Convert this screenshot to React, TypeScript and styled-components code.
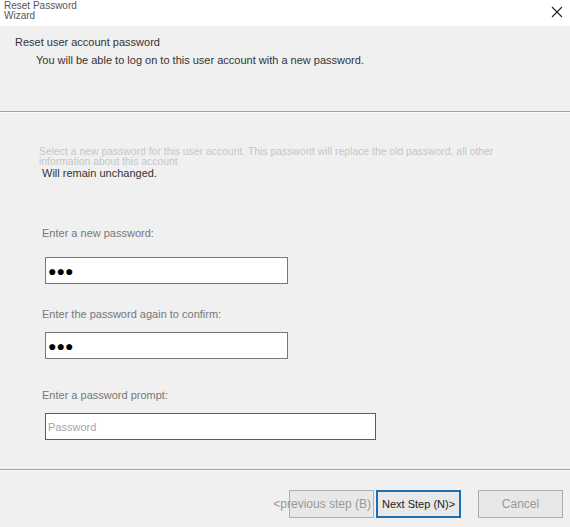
import styled, { createGlobalStyle } from 'styled-components';

const GlobalStyle = createGlobalStyle`
  html, body {
    margin: 0;
    padding: 0;
    background: #f0f0f0;
    font-family: "Liberation Sans", Arial, sans-serif;
  }
`;

const Field = ({ label, value, placeholder, wide, focused, top, gap }: {
  label: string;
  value?: string;
  placeholder?: string;
  wide?: boolean;
  focused?: boolean;
  top: number;
  gap: number;
}) => (
  <FieldBlock $top={top}>
    <FieldLabel>{label}</FieldLabel>
    <TextBox $wide={wide} $focused={focused} $gap={gap}>
      {value ? <Dots>{value}</Dots> : <Placeholder>{placeholder}</Placeholder>}
    </TextBox>
  </FieldBlock>
);

const App = () => {
  return (
    <Window>
      <GlobalStyle />
      <TitleBar>
        <TitleText>
          Reset Password
          <br />
          Wizard
        </TitleText>
        <CloseButton>
          <svg width='12' height='12' viewBox='0 0 12 12'>
            <path d='M1 1L11 11M11 1L1 11' stroke='#222' strokeWidth='1.1' />
          </svg>
        </CloseButton>
      </TitleBar>
      <Header>
        <HeaderTitle>Reset user account password</HeaderTitle>
        <HeaderSub>
          You will be able to log on to this user account with a new password.
        </HeaderSub>
      </Header>
      <Divider />
      <Body>
        <Faded>
          Select a new password for this user account. This password will
          replace the old password, all other
          <br />
          information about this account
        </Faded>
        <Note>Will remain unchanged.</Note>
        <Field label='Enter a new password:' value='●●●' top={48} gap={17} />
        <Field
          label='Enter the password again to confirm:'
          value='●●●'
          top={24}
          gap={11}
        />
        <Field
          label='Enter a password prompt:'
          placeholder='Password'
          wide={true}
          focused={true}
          top={30}
          gap={11}
        />
      </Body>
      <Divider />
      <Footer>
        <NavButton $faded={true}>
          <OverflowLabel>&lt;previous step (B)</OverflowLabel>
        </NavButton>
        <NavButton $primary={true}>Next Step (N)&gt;</NavButton>
        <Spacer />
        <NavButton $faded={true}>Cancel</NavButton>
      </Footer>
    </Window>
  );
};

const Window = styled.div`
  width: 570px;
  height: 527px;
  display: flex;
  flex-direction: column;
  background: #f0f0f0;
  overflow: hidden;
`;

const TitleBar = styled.div`
  height: 26px;
  background: #ffffff;
  display: flex;
  justify-content: space-between;
  padding: 0 4px;
`;

const TitleText = styled.div`
  font-size: 10px;
  line-height: 10px;
  color: #555;
  padding-top: 1px;
`;

const CloseButton = styled.div`
  padding: 4px 3px 0 0;
`;

const Header = styled.div`
  height: 85px;
  padding: 10px 0 0 15px;
  box-sizing: border-box;
`;

const HeaderTitle = styled.div`
  font-size: 11px;
  line-height: 13px;
  color: #333;
`;

const HeaderSub = styled.div`
  font-size: 11px;
  line-height: 13px;
  color: #333;
  padding: 5px 0 0 21px;
`;

const Divider = styled.div`
  height: 1px;
  background: #a0a0a0;
  border-bottom: 1px solid #fafafa;
`;

const Body = styled.div`
  flex: 1;
  padding: 34px 0 0 39px;
  display: flex;
  flex-direction: column;
`;

const Faded = styled.div`
  font-size: 10.4px;
  line-height: 10px;
  color: #c6c6c6;
`;

const Note = styled.div`
  font-size: 11px;
  line-height: 12px;
  color: #333;
  padding-left: 3px;
`;

const FieldBlock = styled.div<{ $top: number }>`
  display: flex;
  flex-direction: column;
  padding-top: ${(p) => p.$top}px;
`;

const FieldLabel = styled.div`
  font-size: 11px;
  line-height: 13px;
  color: #777;
  padding-left: 3px;
`;

const TextBox = styled.div<{ $wide?: boolean; $focused?: boolean; $gap: number }>`
  margin: ${(p) => p.$gap}px 0 0 6px;
  width: ${(p) => (p.$wide ? '331px' : '243px')};
  height: 27px;
  box-sizing: border-box;
  background: #fff;
  border: 1px solid ${(p) => (p.$focused ? '#1c6ea4' : '#777')};
  display: flex;
  align-items: center;
  padding-left: 2px;
`;

const Dots = styled.span`
  font-size: 14px;
  color: #000;
  letter-spacing: 0;
`;

const Placeholder = styled.span`
  font-size: 11px;
  color: #a5a5a5;
`;

const Footer = styled.div`
  height: 56px;
  display: flex;
  align-items: flex-start;
  padding: 19px 7px 0 289px;
  box-sizing: border-box;
  gap: 2px;
`;

const Spacer = styled.div`
  width: 13px;
`;

const NavButton = styled.div<{ $faded?: boolean; $primary?: boolean }>`
  width: 86px;
  height: 28px;
  box-sizing: border-box;
  display: flex;
  align-items: center;
  justify-content: center;
  font-size: ${(p) => (p.$primary ? '11px' : '12px')};
  color: ${(p) => (p.$faded ? '#999' : '#222')};
  background: #e8e8e8;
  border: ${(p) => (p.$primary ? '2px solid #1a6fb3' : '1px solid #adadad')};
  position: relative;
  white-space: nowrap;
`;

const OverflowLabel = styled.span`
  position: absolute;
  right: 2px;
  font-size: 12px;
  color: #999;
`;

export default App;
